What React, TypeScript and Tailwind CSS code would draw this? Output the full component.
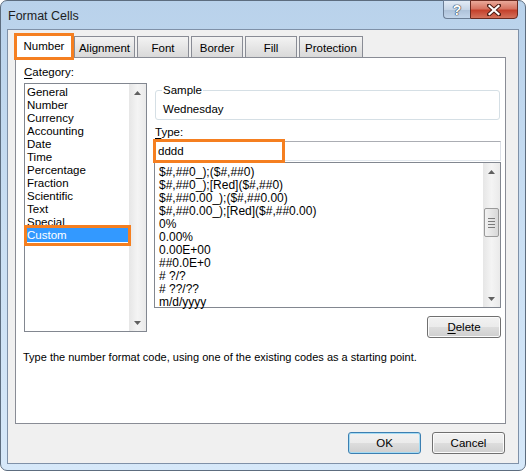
import React from "react";

const categories = [
  "General",
  "Number",
  "Currency",
  "Accounting",
  "Date",
  "Time",
  "Percentage",
  "Fraction",
  "Scientific",
  "Text",
  "Special",
  "Custom",
];

const formats = [
  "$#,##0_);($#,##0)",
  "$#,##0_);[Red]($#,##0)",
  "$#,##0.00_);($#,##0.00)",
  "$#,##0.00_);[Red]($#,##0.00)",
  "0%",
  "0.00%",
  "0.00E+00",
  "##0.0E+0",
  "# ?/?",
  "# ??/??",
  "m/d/yyyy",
];

const tabs = [
  { name: "Alignment", w: "w-[61px]" },
  { name: "Font", w: "w-[52px]" },
  { name: "Border", w: "w-[52px]" },
  { name: "Fill", w: "w-[52px]" },
  { name: "Protection", w: "w-[64px]" },
];

function Arrow({ up }: { up?: boolean }) {
  return (
    <svg width="7" height="4" viewBox="0 0 7 4" className="block">
      {up ? <path d="M0 4 L3.5 0 L7 4 Z" fill="#606060" /> : <path d="M0 0 L3.5 4 L7 0 Z" fill="#606060" />}
    </svg>
  );
}

function ScrollBar({ thumb }: { thumb?: boolean }) {
  return (
    <div className="w-[17px] h-full flex flex-col bg-gradient-to-r from-[#e6e6e6] via-[#f4f4f4] to-[#eaeaea]">
      <div className="h-[17px] flex items-center justify-center">
        <Arrow up />
      </div>
      <div className="flex-1 flex flex-col">
        {thumb && (
          <>
            <div className="h-[28px]" />
            <div className="mx-[1px] h-[29px] rounded-[2px] border border-[#9a9a9a] bg-gradient-to-r from-[#f2f2f2] to-[#d8d8d8] flex flex-col items-center justify-center gap-[2px]">
              <div className="w-[7px] h-[1px] bg-[#7a7a7a]" />
              <div className="w-[7px] h-[1px] bg-[#7a7a7a]" />
              <div className="w-[7px] h-[1px] bg-[#7a7a7a]" />
              <div className="w-[7px] h-[1px] bg-[#7a7a7a]" />
            </div>
          </>
        )}
      </div>
      <div className="h-[17px] flex items-center justify-center">
        <Arrow />
      </div>
    </div>
  );
}

function Button({ children, def, w }: { children: React.ReactNode; def?: boolean; w: string }) {
  return (
    <div
      className={`${w} h-[22px] rounded-[3px] border ${
        def ? "border-[#3c7fb1] shadow-[inset_0_0_0_1px_#a5dbf3]" : "border-[#707070] shadow-[inset_0_0_0_1px_#fbfbfb]"
      } bg-[linear-gradient(to_bottom,#f2f2f2_0%,#ebebeb_50%,#dddddd_51%,#cfcfcf_100%)] flex items-center justify-center text-[11.5px]`}
    >
      {children}
    </div>
  );
}

export default function App() {
  return (
    <div className="w-[528px] h-[473px] bg-white font-['Liberation_Sans',Arial,sans-serif] text-[11px] leading-[13px] text-black">
      <div className="w-[526px] h-[471px] rounded-[7px] border border-[#5d6d7f] bg-gradient-to-b from-[#b9d2eb] via-[#cadff3] to-[#d6e8f9] flex flex-col px-[6px] pb-[6px]">
        {/* title bar */}
        <div className="h-[28px] flex items-start justify-between">
          <div className="pl-[1px] pt-[8px] text-[12.5px] leading-[14px] text-[#1e1e1e]">Format Cells</div>
          <div className="flex mr-[1px] -mt-[1px]">
            <div className="w-[27px] h-[19px] rounded-bl-[4px] border border-[#6c7e95] border-r-0 bg-[linear-gradient(to_bottom,#e2ebf6_0%,#c6d5e6_50%,#adc1d8_51%,#c2d5ea_100%)] flex items-center justify-center">
              <span className="text-white font-bold text-[14px] leading-none [text-shadow:0_0_1px_#24364d,0_0_1px_#24364d,0_0_1px_#24364d]">?</span>
            </div>
            <div className="w-[48px] h-[19px] rounded-br-[4px] border border-[#6b2a20] bg-[linear-gradient(to_bottom,#e9a99a_0%,#d67462_45%,#c4412c_55%,#d4725c_100%)] flex items-center justify-center">
              <svg width="14" height="12" viewBox="0 0 14 12">
                <path d="M2 1.5 L12 10.5 M12 1.5 L2 10.5" stroke="#4a1a12" strokeWidth="4" strokeLinecap="square" />
                <path d="M2.5 2 L11.5 10 M11.5 2 L2.5 10" stroke="#ffffff" strokeWidth="2.2" strokeLinecap="square" />
              </svg>
            </div>
          </div>
        </div>

        {/* client area */}
        <div className="flex-1 border border-[#7f91a8] bg-[#f0f0f0] flex flex-col">
          {/* tabs */}
          <div className="ml-[7px] mt-[3px] h-[24px] flex items-end">
            <div className="relative z-10 w-[58px] h-[24px] -mb-[1px] bg-white border border-b-0 border-[#898c95] flex items-center justify-center text-[11.5px]">
              Number
              <div className="absolute -left-[2px] -top-[2px] w-[60px] h-[27px] border-[3px] border-[#f57f20]" />
            </div>
            {tabs.map((t) => (
              <div
                key={t.name}
                className={`${t.w} h-[21px] ml-[1px] mr-[1px] border border-b-0 border-[#898c95] bg-gradient-to-b from-[#f3f3f3] to-[#d9d9d9] flex items-center justify-center pt-[2px] text-[11.5px]`}
              >
                {t.name}
              </div>
            ))}
          </div>

          {/* panel */}
          <div className="ml-[7px] w-[491px] h-[367px] border border-[#898c95] bg-white flex flex-col">
            <div className="flex">
              {/* left column */}
              <div className="ml-[8px] w-[123px] flex flex-col">
                <div className="mt-[8px] h-[13px] text-[11.5px]">
                  <span className="underline underline-offset-2">C</span>ategory:
                </div>
                <div className="mt-[4px] h-[249px] border border-[#828790] flex text-[11.5px]">
                  <div className="flex-1 pt-[2px] pl-[2px] flex flex-col">
                    {categories.map((c) => (
                      <div key={c} className="relative h-[13px]">
                        {c === "Custom" ? (
                          <>
                            <div className="h-[14px] -mt-[1px] bg-[#3399ff] text-white pt-[1px]">{c}</div>
                            <div className="absolute -left-[3px] -top-[4px] w-[107px] h-[21px] border-[3px] border-[#f57f20]" />
                          </>
                        ) : (
                          c
                        )}
                      </div>
                    ))}
                  </div>
                  <ScrollBar />
                </div>
              </div>

              {/* right column */}
              <div className="ml-[7px] w-[347px] flex flex-col text-[11.5px]">
                <fieldset className="mt-[26px] ml-[1px] mr-[1px] border border-[#d5dfe5] rounded-[3px] pb-[3px] px-[7px]">
                  <legend className="px-[1px] -ml-[1px]">Sample</legend>
                  <div className="mt-[6px] h-[13px]">Wednesday</div>
                </fieldset>
                <div className="mt-[6px] ml-[1px] h-[13px]">
                  <span className="underline underline-offset-2">T</span>ype:
                </div>
                <div className="relative mt-[2px] h-[20px] border border-[#abadb3] border-b-[#e3e9ef] border-r-[#dbdfe6] flex items-center pl-[3px]">
                  dddd
                  <div className="absolute -left-[2px] -top-[3px] w-[132px] h-[24px] border-[3px] border-[#f57f20]" />
                </div>
                <div className="mt-[1px] h-[146px] border border-[#828790] flex">
                  <div className="flex-1 pt-[3px] pl-[4px] flex flex-col text-[12px]">
                    {formats.map((f) => (
                      <div key={f} className="h-[13px] whitespace-pre">
                        {f}
                      </div>
                    ))}
                  </div>
                  <ScrollBar thumb />
                </div>
                <div className="mt-[8px] flex justify-end">
                  <Button w="w-[74px]">
                    <span>
                      <span className="underline underline-offset-2">D</span>elete
                    </span>
                  </Button>
                </div>
              </div>
            </div>
            <div className="mt-[13px] ml-[7px]">
              Type the number format code, using one of the existing codes as a starting point.
            </div>
          </div>

          {/* dialog buttons */}
          <div className="mt-[8px] mr-[13px] flex justify-end gap-[11px]">
            <Button def w="w-[73px]">
              OK
            </Button>
            <Button w="w-[73px]">Cancel</Button>
          </div>
        </div>
      </div>
    </div>
  );
}
